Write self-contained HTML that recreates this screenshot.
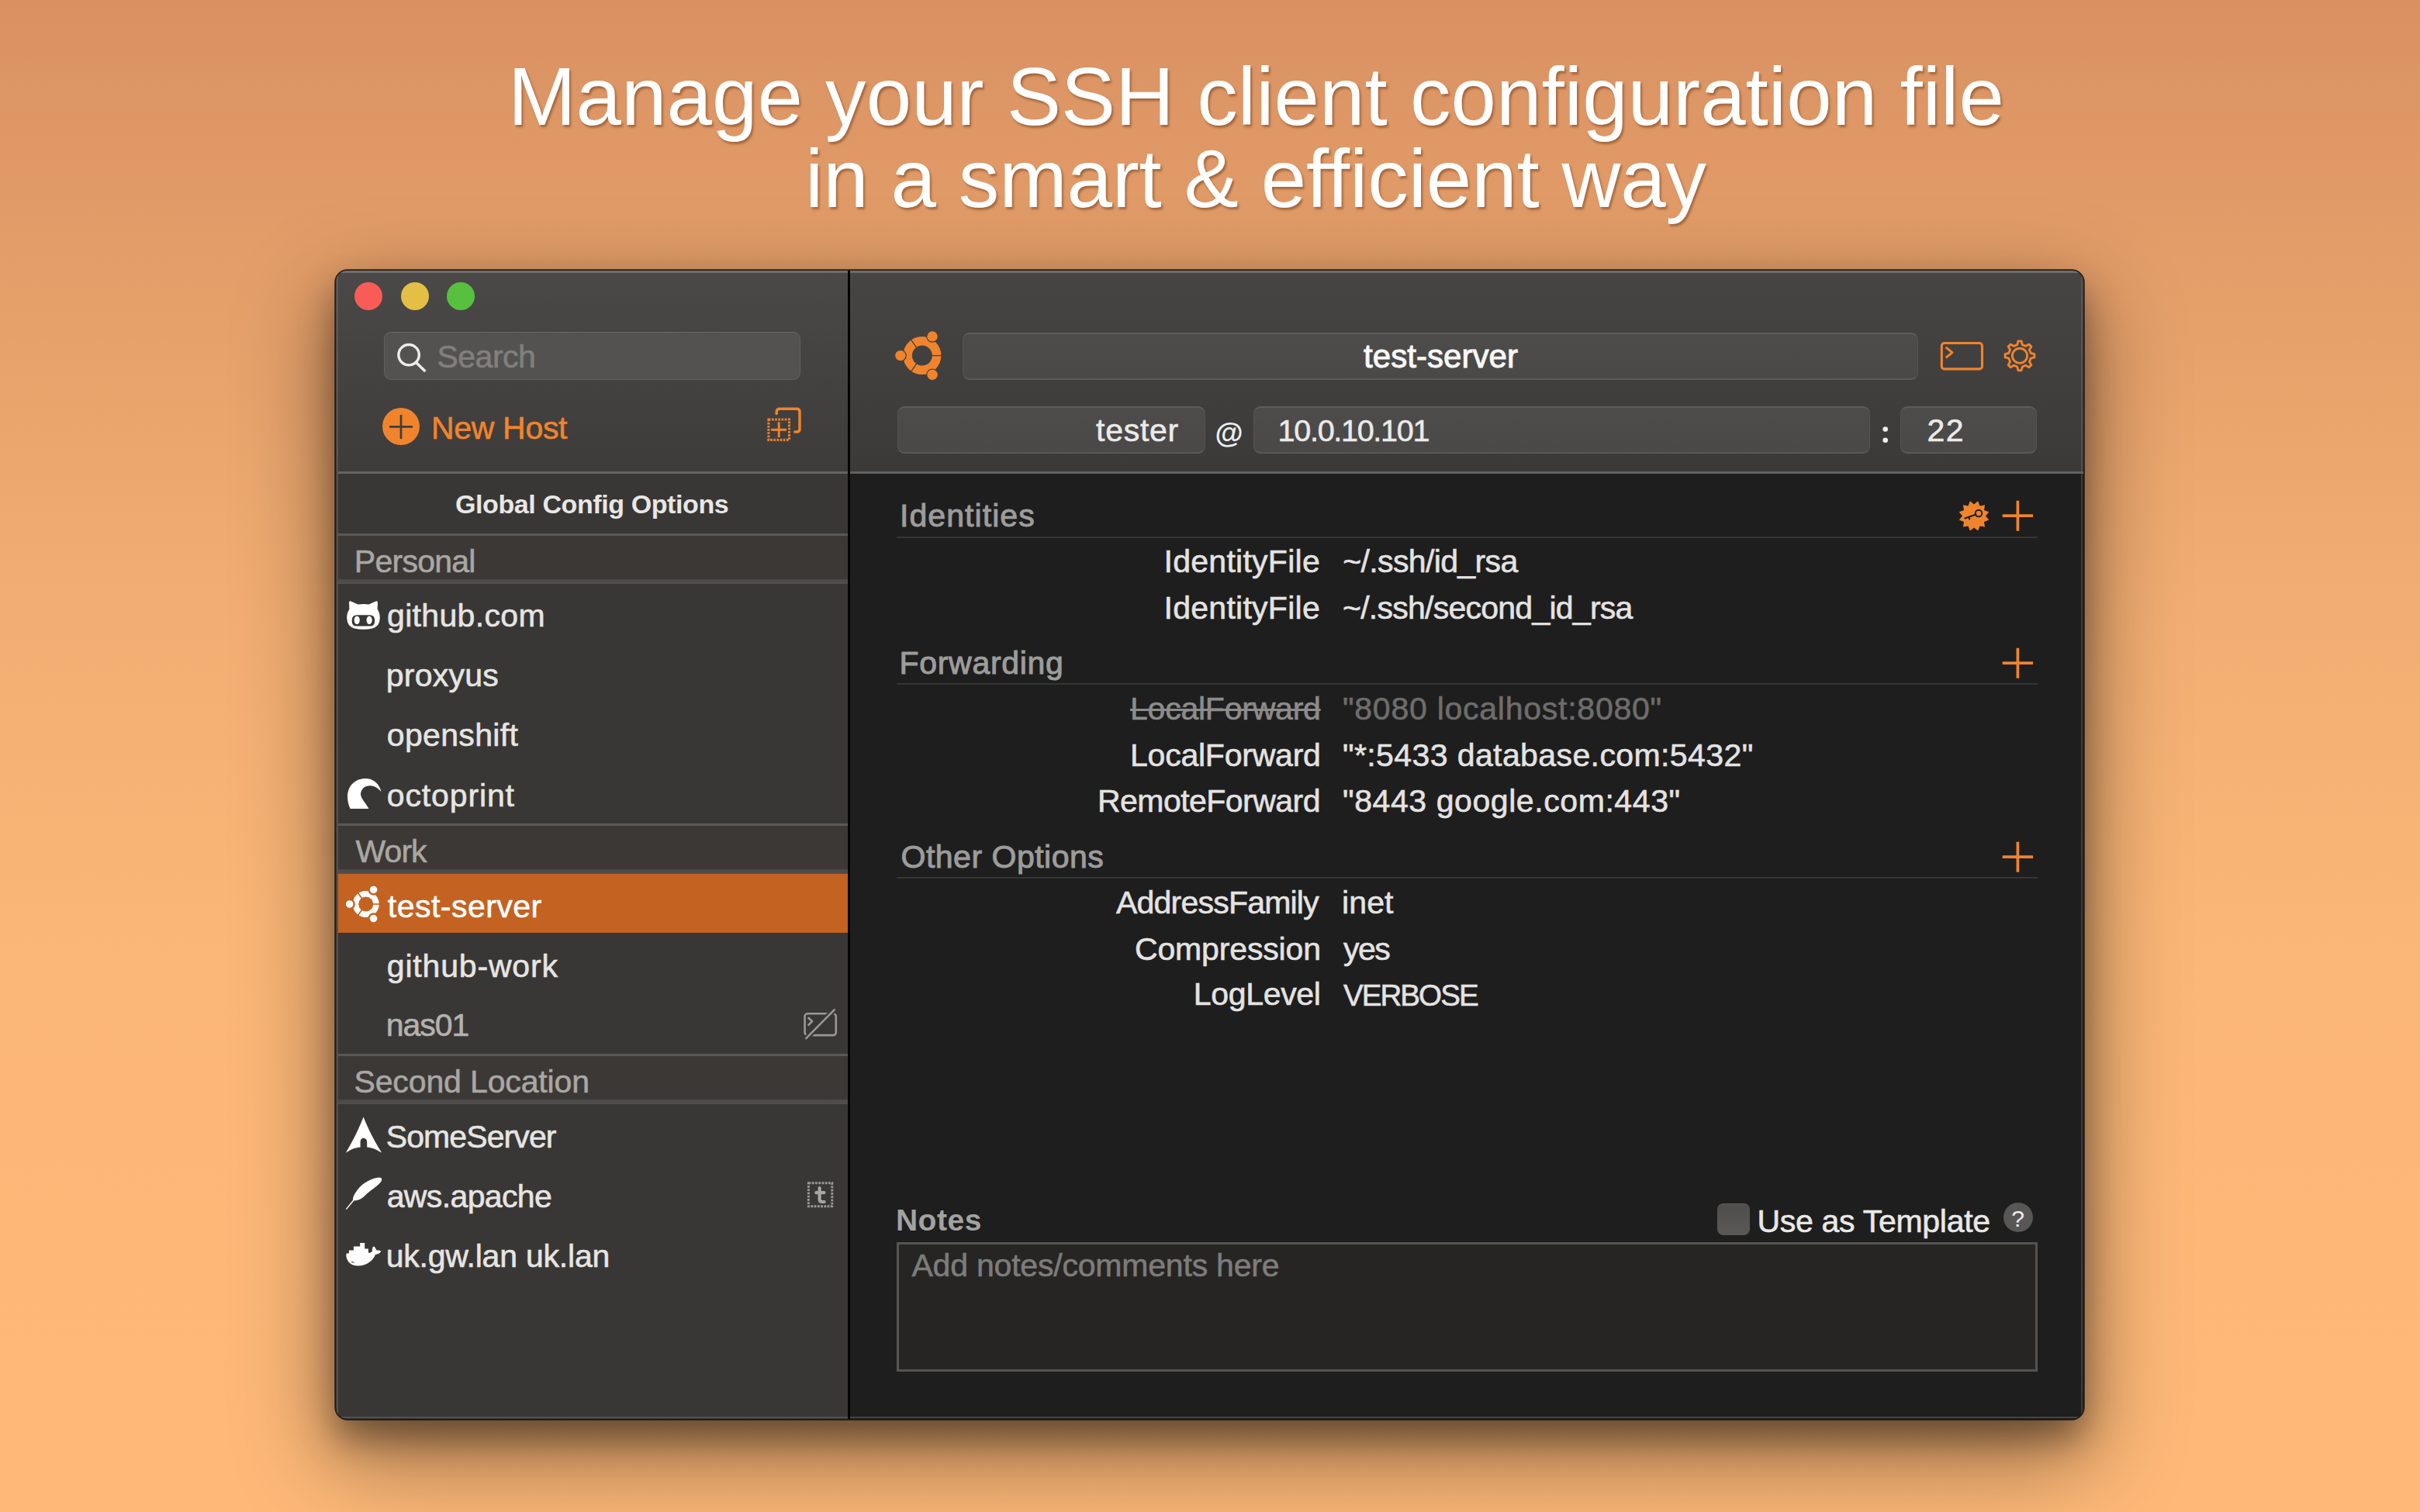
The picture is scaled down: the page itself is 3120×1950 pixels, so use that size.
<!DOCTYPE html>
<html><head><meta charset="utf-8">
<style>
html,body{margin:0;padding:0;width:3120px;height:1950px;overflow:hidden;}
body{background:linear-gradient(180deg,#D99162 0%,#E5A06A 20.5%,#F2AE72 41%,#FAB676 61.5%,#FDB878 82%,#FEB978 100%);font-family:"Liberation Sans",sans-serif;position:relative;}
.t{position:absolute;white-space:nowrap;line-height:normal;}
svg{display:block}
</style></head><body>
<div class="t" style="top:65.4px;font-size:105px;color:#fff;letter-spacing:0.07px;left:655.0px;text-shadow:2px 3px 3px rgba(90,45,10,.45);">Manage your SSH client configuration file</div>
<div class="t" style="top:171.4px;font-size:105px;color:#fff;letter-spacing:-0.13px;left:1038.0px;text-shadow:2px 3px 3px rgba(90,45,10,.45);">in a smart &amp; efficient way</div>
<div id="win" style="position:absolute;left:433px;top:349px;width:2253px;height:1481px;border-radius:15px;overflow:hidden;background:#1e1e1e;box-shadow:0 0 0 1.7px rgba(12,12,12,.85),0 25px 45px rgba(0,0,0,.38),0 45px 120px 10px rgba(0,0,0,.4);">
<div style="position:absolute;left:0;top:0;width:660px;height:100%;background:#393735"></div>
<div style="position:absolute;left:0;top:0;width:660px;height:259px;background:linear-gradient(#4a4948,#3d3c3b)"></div>
<div style="position:absolute;left:663px;top:0;right:0;height:259px;background:linear-gradient(#464544,#3b3a39)"></div>
<div style="position:absolute;left:0;top:0;right:0;height:3px;background:#6f6d6b"></div>
<div style="position:absolute;left:1px;top:0;width:2px;height:100%;background:rgba(120,118,116,.45)"></div>
<div style="position:absolute;right:1px;top:0;width:2px;height:100%;background:rgba(120,118,116,.35)"></div>
<div style="position:absolute;left:0;bottom:1px;right:0;height:2px;background:rgba(110,108,106,.5)"></div>
<div style="position:absolute;left:660px;top:0;width:3px;height:100%;background:#050505"></div>
</div>
<div style="position:absolute;left:457px;top:364px;width:36px;height:36px;background:#F95C57;border-radius:50%;"></div>
<div style="position:absolute;left:516.5px;top:364px;width:36px;height:36px;background:#E3BF45;border-radius:50%;"></div>
<div style="position:absolute;left:576px;top:364px;width:36px;height:36px;background:#57C13F;border-radius:50%;"></div>
<div style="position:absolute;left:495px;top:428px;width:537px;height:62px;background:#545250;border-radius:9px;box-sizing:border-box;border:1.5px solid #636160;border-top-color:#6b6967;"></div>
<svg style="position:absolute;left:505px;top:435px;overflow:visible" width="50" height="50" viewBox="0 0 50 50"><circle cx="22.1" cy="22.7" r="13.2" fill="none" stroke="#ececec" stroke-width="3.4"/><line x1="32" y1="33" x2="43.4" y2="44" stroke="#ececec" stroke-width="3.6"/></svg>
<div class="t" style="top:436.9px;font-size:41px;color:#817f7d;letter-spacing:-0.48px;left:563.4px;-webkit-text-stroke:0.6px #817f7d;">Search</div>
<svg style="position:absolute;left:493px;top:525.6px;overflow:visible" width="48" height="48" viewBox="0 0 48 48"><circle cx="24" cy="24" r="24" fill="#F0842D"/><path d="M9 24.3H39M24 9V40" stroke="#3e3d3c" stroke-width="2.7"/></svg>
<div class="t" style="top:528.9px;font-size:41px;color:#F0842D;letter-spacing:-0.3px;left:555.9px;-webkit-text-stroke:0.6px #F0842D;">New Host</div>
<svg style="position:absolute;left:980px;top:520px;overflow:visible" width="60" height="60" viewBox="0 0 60 60"><path d="M21.2 13.5V11.3Q21.2 7.3 25.2 7.3H47Q51 7.3 51 11.3V32.9Q51 36.9 47 36.9H44.8" fill="none" stroke="#F0842D" stroke-width="3.5" stroke-linecap="round"/><rect x="10.9" y="21" width="26.6" height="26.4" fill="none" stroke="#F0842D" stroke-width="3.1" stroke-dasharray="2.6 1.55"/><path d="M14.1 34.3H34.1M24.2 24.2V44" stroke="#F0842D" stroke-width="2.9"/></svg>
<div style="position:absolute;left:436px;top:608px;width:657px;height:3px;background:#666462;"></div>
<div class="t" style="top:631.2px;font-size:34px;color:#e8e7e6;font-weight:700;letter-spacing:-0.4px;left:587.0px;">Global Config Options</div>
<div style="position:absolute;left:436px;top:688px;width:657px;height:3px;background:#5b5957;"></div>
<div style="position:absolute;left:436px;top:691px;width:657px;height:56px;background:#3c3835;"></div>
<div style="position:absolute;left:436px;top:747px;width:657px;height:6px;background:linear-gradient(#4a4846,#52504e);"></div>
<div class="t" style="top:701.4px;font-size:41px;color:#a9a7a4;letter-spacing:-0.74px;left:456.8px;-webkit-text-stroke:0.6px #a9a7a4;">Personal</div>
<div class="t" style="top:771.1px;font-size:41px;color:#e6e5e3;letter-spacing:0.34px;left:499.0px;-webkit-text-stroke:0.6px #e6e5e3;">github.com</div>
<div class="t" style="top:848.2px;font-size:41px;color:#e6e5e3;letter-spacing:0.22px;left:497.8px;-webkit-text-stroke:0.6px #e6e5e3;">proxyus</div>
<div class="t" style="top:925.2px;font-size:41px;color:#e6e5e3;letter-spacing:0.34px;left:498.8px;-webkit-text-stroke:0.6px #e6e5e3;">openshift</div>
<div class="t" style="top:1002.7px;font-size:41px;color:#e6e5e3;letter-spacing:0.87px;left:498.8px;-webkit-text-stroke:0.6px #e6e5e3;">octoprint</div>
<div style="position:absolute;left:436px;top:1062px;width:657px;height:3px;background:#5b5957;"></div>
<div style="position:absolute;left:436px;top:1065px;width:657px;height:56px;background:#3c3835;"></div>
<div style="position:absolute;left:436px;top:1121px;width:657px;height:6px;background:linear-gradient(#4a4846,#52504e);"></div>
<div class="t" style="top:1075.4px;font-size:41px;color:#a9a7a4;letter-spacing:-0.93px;left:458.5px;-webkit-text-stroke:0.6px #a9a7a4;">Work</div>
<div style="position:absolute;left:436px;top:1127px;width:657px;height:76px;background:#C46221;"></div>
<div class="t" style="top:1145.5px;font-size:41px;color:#ffffff;letter-spacing:0.48px;left:499.8px;-webkit-text-stroke:0.6px #ffffff;">test-server</div>
<div class="t" style="top:1222.5px;font-size:41px;color:#e6e5e3;letter-spacing:0.82px;left:498.8px;-webkit-text-stroke:0.6px #e6e5e3;">github-work</div>
<div class="t" style="top:1298.9px;font-size:41px;color:#b4b2af;letter-spacing:-1.08px;left:497.8px;-webkit-text-stroke:0.6px #b4b2af;">nas01</div>
<div style="position:absolute;left:436px;top:1359px;width:657px;height:3px;background:#5b5957;"></div>
<div style="position:absolute;left:436px;top:1362px;width:657px;height:56px;background:#3c3835;"></div>
<div style="position:absolute;left:436px;top:1418px;width:657px;height:6px;background:linear-gradient(#4a4846,#52504e);"></div>
<div class="t" style="top:1372.4px;font-size:41px;color:#a9a7a4;letter-spacing:-0.14px;left:456.5px;-webkit-text-stroke:0.6px #a9a7a4;">Second Location</div>
<div class="t" style="top:1442.6px;font-size:41px;color:#e6e5e3;letter-spacing:-0.9px;left:497.7px;-webkit-text-stroke:0.6px #e6e5e3;">SomeServer</div>
<div class="t" style="top:1519.6px;font-size:41px;color:#e6e5e3;letter-spacing:-0.63px;left:498.7px;-webkit-text-stroke:0.6px #e6e5e3;">aws.apache</div>
<div class="t" style="top:1596.9px;font-size:41px;color:#e6e5e3;letter-spacing:-0.21px;left:497.7px;-webkit-text-stroke:0.6px #e6e5e3;">uk.gw.lan uk.lan</div>
<svg style="position:absolute;left:440px;top:760px;overflow:visible" width="60" height="60" viewBox="0 0 60 60"><path d="M10 17.5Q9.8 14.6 12.6 15.6L21.5 19.6Q28.5 18.2 35.5 19.6L44.4 15.6Q47.2 14.6 47 17.5L46.6 25.5Q49.8 30.5 49.8 37Q49.8 47.5 40 50.5Q28.5 53 17 50.5Q7.2 47.5 7.2 37Q7.2 30.5 10.4 25.5Z" fill="#ffffff"/><path d="M20 33.3H37Q43.2 33.3 43.2 40.4Q43.2 47.6 37 47.6H20Q13.6 47.6 13.6 40.4Q13.6 33.3 20 33.3Z" fill="#393735"/><ellipse cx="20.2" cy="39.8" rx="3.6" ry="5.2" fill="#ffffff"/><ellipse cx="36.1" cy="39.8" rx="3.6" ry="5.2" fill="#ffffff"/></svg>
<svg style="position:absolute;left:440px;top:995px;overflow:visible" width="60" height="60" viewBox="0 0 60 60"><path d="M11.5 48C8.2 40.5 7.2 33 8.6 26.5C11 15.5 20.5 9 31 9C40.5 9 48.5 14.5 51.5 26C46.5 20.3 41.5 18.3 36.5 18.3C30 18.5 25 23 25 29.5C25.5 35 31.5 40.5 35.5 48Z" fill="#ffffff"/></svg>
<svg style="position:absolute;left:440px;top:1135px;overflow:visible" width="60" height="60" viewBox="0 0 60 60"><circle cx="31.7" cy="31" r="13.25" fill="none" stroke="#ffffff" stroke-width="7.5"/><line x1="31.7" y1="31" x2="52.45" y2="31.00" stroke="#C46221" stroke-width="1.6"/><line x1="31.7" y1="31" x2="19.80" y2="48.00" stroke="#C46221" stroke-width="1.6"/><line x1="31.7" y1="31" x2="19.80" y2="14.00" stroke="#C46221" stroke-width="1.6"/><circle cx="10.70" cy="31.00" r="6.0" fill="#ffffff" stroke="#C46221" stroke-width="2.4"/><circle cx="41.56" cy="12.46" r="6.0" fill="#ffffff" stroke="#C46221" stroke-width="2.4"/><circle cx="41.56" cy="49.54" r="6.0" fill="#ffffff" stroke="#C46221" stroke-width="2.4"/></svg>
<svg style="position:absolute;left:1030px;top:1295px;overflow:visible" width="55" height="55" viewBox="0 0 55 55"><rect x="7.6" y="12.3" width="40.2" height="27.8" rx="3.5" fill="none" stroke="#9a9896" stroke-width="2.6"/><path d="M12.4 17.8L17.1 22.2L12.4 26.9" fill="none" stroke="#9a9896" stroke-width="2.6" stroke-linecap="round" stroke-linejoin="round"/><line x1="9.3" y1="44.2" x2="45.6" y2="7.3" stroke="#393735" stroke-width="7"/><line x1="9.3" y1="44.2" x2="45.6" y2="7.3" stroke="#9a9896" stroke-width="2.6" stroke-linecap="round"/></svg>
<svg style="position:absolute;left:440px;top:1435px;overflow:visible" width="60" height="60" viewBox="0 0 60 60"><path d="M28.6 5.4C31 11.5 33 16 35.5 21.5C41 33 46 42 52.2 51.8C45 47 39 45 33.2 44.5L33.2 38Q33 33 28.6 32.8Q24.6 33 24.6 38L24.6 44.5C18.5 45 12.5 47 5.8 51.8C11.5 42 16.5 33 21.8 21.5C24.2 16 26.2 11.5 28.6 5.4Z" fill="#ffffff"/></svg>
<svg style="position:absolute;left:440px;top:1512px;overflow:visible" width="60" height="60" viewBox="0 0 60 60"><path d="M51.6 7.2C46 5 31 10.5 22.5 20.5C17.5 26.5 14.8 31.5 15 35.8L5.8 47.2L6.8 47.9L16.4 36.6C22 36.3 26.5 34 30.5 30C38 22.5 46 19 50.8 12.6C52.3 10.6 52.6 8.3 51.6 7.2Z" fill="#ffffff"/></svg>
<svg style="position:absolute;left:1030px;top:1515px;overflow:visible" width="55" height="55" viewBox="0 0 55 55"><rect x="12.4" y="10.8" width="30.4" height="30" fill="none" stroke="#9a9896" stroke-width="3" stroke-dasharray="2.9 1.35"/><path d="M26.6 17.2V31.5Q26.6 35 30 35H32.6M22.3 23.2H32.4" fill="none" stroke="#a8a6a4" stroke-width="4.2" stroke-linecap="round"/></svg>
<svg style="position:absolute;left:440px;top:1590px;overflow:visible" width="60" height="60" viewBox="0 0 60 60"><path d="M6.5 26.5L9.9 26.5L9.9 22.6L15.9 22.6L15.9 17.5L24.2 17.5L24.2 13.1L30.2 13.1L30.2 20.6L34.9 20.6L34.9 25.8C37 26 39.5 25 40 23C39.5 20.5 40.3 18 41.8 17.5C43.5 18 44.8 20.5 45.5 22.5C47.5 22.3 50 22.5 51.3 23.8C50 26.3 47 27.8 44 28C41 35.5 33 42.5 21.5 42.5C13.5 42.5 7.5 38 6.3 30Z" fill="#ffffff"/><path d="M13 36.8Q15.5 37 17.5 39L13.5 38.2Z" fill="#393735"/></svg>
<svg style="position:absolute;left:1145px;top:420px;overflow:visible" width="80" height="80" viewBox="0 0 80 80"><circle cx="43.9" cy="38.6" r="18.75" fill="none" stroke="#F0842D" stroke-width="11.5"/><line x1="43.9" y1="38.6" x2="74.15" y2="38.60" stroke="#42413f" stroke-width="1.3"/><line x1="43.9" y1="38.6" x2="26.55" y2="63.38" stroke="#42413f" stroke-width="1.3"/><line x1="43.9" y1="38.6" x2="26.55" y2="13.82" stroke="#42413f" stroke-width="1.3"/><circle cx="15.90" cy="38.60" r="7.3" fill="#F0842D" stroke="#42413f" stroke-width="1.2"/><circle cx="57.05" cy="13.88" r="7.3" fill="#F0842D" stroke="#42413f" stroke-width="1.2"/><circle cx="57.05" cy="63.32" r="7.3" fill="#F0842D" stroke="#42413f" stroke-width="1.2"/></svg>
<div style="position:absolute;left:1241px;top:428.5px;width:1232px;height:61.5px;background:linear-gradient(#4d4c4b,#4a4948);border-radius:9px;box-sizing:border-box;border:1.5px solid #555453;border-top:2px solid #5d5c5b;border-bottom:2px solid #5b5a59;"></div>
<div class="t" style="top:436.2px;font-size:42px;color:#f8f8f8;letter-spacing:0.06px;left:1758.0px;-webkit-text-stroke:1.0px #f8f8f8;">test-server</div>
<svg style="position:absolute;left:2490px;top:425px;overflow:visible" width="150" height="70" viewBox="0 0 150 70"><rect x="13.3" y="17.5" width="52.2" height="33.4" rx="3.5" fill="none" stroke="#F0842D" stroke-width="3.1"/><path d="M19.6 23.6L27.0 29.6L19.6 35.6" fill="none" stroke="#F0842D" stroke-width="3.0" stroke-linecap="round" stroke-linejoin="round"/></svg>
<svg style="position:absolute;left:2490px;top:425px;overflow:visible" width="150" height="70" viewBox="0 0 150 70"><path d="M110.70 19.58 L111.92 14.91 L116.08 14.91 L117.30 19.58 L121.73 21.41 L125.88 18.97 L128.83 21.92 L126.39 26.07 L128.22 30.50 L132.89 31.72 L132.89 35.88 L128.22 37.10 L126.39 41.53 L128.83 45.68 L125.88 48.63 L121.73 46.19 L117.30 48.02 L116.08 52.69 L111.92 52.69 L110.70 48.02 L106.27 46.19 L102.12 48.63 L99.17 45.68 L101.61 41.53 L99.78 37.10 L95.11 35.88 L95.11 31.72 L99.78 30.50 L101.61 26.07 L99.17 21.92 L102.12 18.97 L106.27 21.41Z" fill="none" stroke="#F0842D" stroke-width="2.9" stroke-linejoin="round"/><circle cx="114" cy="33.8" r="9.6" fill="none" stroke="#F0842D" stroke-width="2.9"/></svg>
<div style="position:absolute;left:1157px;top:523.5px;width:396.5px;height:61.5px;background:linear-gradient(#4d4c4b,#4a4948);border-radius:9px;box-sizing:border-box;border:1.5px solid #555453;border-top:2px solid #5d5c5b;border-bottom:2px solid #5b5a59;"></div>
<div class="t" style="top:531.9px;font-size:41px;color:#ebeae9;letter-spacing:0.74px;left:1413.0px;-webkit-text-stroke:0.6px #ebeae9;">tester</div>
<div class="t" style="top:537.5px;font-size:37px;color:#eeeeee;font-weight:700;left:1566.6px;">@</div>
<div style="position:absolute;left:1616px;top:523.5px;width:794.5px;height:61.5px;background:linear-gradient(#4d4c4b,#4a4948);border-radius:9px;box-sizing:border-box;border:1.5px solid #555453;border-top:2px solid #5d5c5b;border-bottom:2px solid #5b5a59;"></div>
<div class="t" style="top:533.2px;font-size:39.5px;color:#ebeae9;letter-spacing:-1.29px;left:1647.6px;-webkit-text-stroke:0.6px #ebeae9;">10.0.10.101</div>
<svg style="position:absolute;left:2420px;top:545px;overflow:visible" width="22" height="30" viewBox="0 0 22 30"><circle cx="10.7" cy="8.5" r="3.3" fill="#eeeeee"/><circle cx="10.7" cy="22.7" r="3.3" fill="#eeeeee"/></svg>
<div style="position:absolute;left:2450px;top:523.5px;width:175.5px;height:61.5px;background:linear-gradient(#4d4c4b,#4a4948);border-radius:9px;box-sizing:border-box;border:1.5px solid #555453;border-top:2px solid #5d5c5b;border-bottom:2px solid #5b5a59;"></div>
<div class="t" style="top:531.9px;font-size:41px;color:#ebeae9;letter-spacing:1.3px;left:2484.6px;-webkit-text-stroke:0.6px #ebeae9;">22</div>
<div style="position:absolute;left:1096px;top:608px;width:1590px;height:3px;background:#646260;"></div>
<div class="t" style="top:641.9px;font-size:41px;color:#9d9c9b;letter-spacing:1.07px;left:1160.0px;-webkit-text-stroke:1.0px #9d9c9b;">Identities</div>
<div style="position:absolute;left:1156px;top:691.5px;width:1471px;height:2px;background:#353535;"></div>
<svg style="position:absolute;left:2525px;top:645px;overflow:visible" width="40" height="41" viewBox="0 0 40 41"><path d="M25.15 1.18 L27.50 7.41 L34.07 6.33 L32.99 12.90 L39.22 15.25 L35.00 20.40 L39.22 25.55 L32.99 27.90 L34.07 34.47 L27.50 33.39 L25.15 39.62 L20.00 35.40 L14.85 39.62 L12.50 33.39 L5.93 34.47 L7.01 27.90 L0.78 25.55 L5.00 20.40 L0.78 15.25 L7.01 12.90 L5.93 6.33 L12.50 7.41 L14.85 1.18 L20.00 5.40Z" fill="#F0842D"/><circle cx="26" cy="17" r="4.3" fill="none" stroke="#1e1e1e" stroke-width="1.9"/><path d="M8.4 23.4L22.4 18.6" stroke="#1e1e1e" stroke-width="2.1" stroke-linecap="round"/><path d="M12.5 22.5L14.5 21.8L15.3 25L13.4 25.6Z" fill="#1e1e1e"/></svg>
<svg style="position:absolute;left:2580px;top:644.3px;overflow:visible" width="44" height="42" viewBox="0 0 44 42"><path d="M1.7 21.2H41.1M21.4 1.7V40.8" stroke="#F0842D" stroke-width="3.7"/></svg>
<div class="t" style="top:701.4px;font-size:41px;color:#e4e3e2;letter-spacing:0.27px;left:1500.5px;-webkit-text-stroke:0.6px #e4e3e2;">IdentityFile</div>
<div class="t" style="top:701.4px;font-size:41px;color:#e4e3e2;letter-spacing:-0.63px;left:1731.2px;-webkit-text-stroke:0.6px #e4e3e2;">~/.ssh/id_rsa</div>
<div class="t" style="top:760.9px;font-size:41px;color:#e4e3e2;letter-spacing:0.27px;left:1500.5px;-webkit-text-stroke:0.6px #e4e3e2;">IdentityFile</div>
<div class="t" style="top:760.9px;font-size:41px;color:#e4e3e2;letter-spacing:-0.75px;left:1731.0px;-webkit-text-stroke:0.6px #e4e3e2;">~/.ssh/second_id_rsa</div>
<div class="t" style="top:831.6px;font-size:41px;color:#9d9c9b;letter-spacing:0.7px;left:1159.5px;-webkit-text-stroke:1.0px #9d9c9b;">Forwarding</div>
<div style="position:absolute;left:1156px;top:881.2px;width:1471px;height:2px;background:#353535;"></div>
<svg style="position:absolute;left:2580px;top:834.1px;overflow:visible" width="44" height="42" viewBox="0 0 44 42"><path d="M1.7 21.2H41.1M21.4 1.7V40.8" stroke="#F0842D" stroke-width="3.7"/></svg>
<div class="t" style="top:891.1px;font-size:41px;color:#8d8c8b;letter-spacing:-0.23px;left:1457.0px;text-decoration:line-through;text-decoration-thickness:2.5px;-webkit-text-stroke:0.6px #8d8c8b;">LocalForward</div>
<div class="t" style="top:891.1px;font-size:41px;color:#6e6d6c;letter-spacing:0.75px;left:1731.0px;-webkit-text-stroke:0.6px #6e6d6c;">"8080 localhost:8080"</div>
<div class="t" style="top:950.6px;font-size:41px;color:#e4e3e2;letter-spacing:-0.23px;left:1457.0px;-webkit-text-stroke:0.6px #e4e3e2;">LocalForward</div>
<div class="t" style="top:950.6px;font-size:41px;color:#e4e3e2;letter-spacing:0.4px;left:1731.0px;-webkit-text-stroke:0.6px #e4e3e2;">"*:5433 database.com:5432"</div>
<div class="t" style="top:1010.1px;font-size:41px;color:#e4e3e2;letter-spacing:-0.54px;left:1415.0px;-webkit-text-stroke:0.6px #e4e3e2;">RemoteForward</div>
<div class="t" style="top:1010.1px;font-size:41px;color:#e4e3e2;letter-spacing:0.58px;left:1731.0px;-webkit-text-stroke:0.6px #e4e3e2;">"8443 google.com:443"</div>
<div class="t" style="top:1081.7px;font-size:41px;color:#9d9c9b;letter-spacing:0.51px;left:1161.5px;-webkit-text-stroke:1.0px #9d9c9b;">Other Options</div>
<div style="position:absolute;left:1156px;top:1131.3px;width:1471px;height:2px;background:#353535;"></div>
<svg style="position:absolute;left:2580px;top:1084.2px;overflow:visible" width="44" height="42" viewBox="0 0 44 42"><path d="M1.7 21.2H41.1M21.4 1.7V40.8" stroke="#F0842D" stroke-width="3.7"/></svg>
<div class="t" style="top:1141.2px;font-size:41px;color:#e4e3e2;letter-spacing:-0.79px;left:1439.0px;-webkit-text-stroke:0.6px #e4e3e2;">AddressFamily</div>
<div class="t" style="top:1141.2px;font-size:41px;color:#e4e3e2;letter-spacing:0.13px;left:1730.0px;-webkit-text-stroke:0.6px #e4e3e2;">inet</div>
<div class="t" style="top:1200.7px;font-size:41px;color:#e4e3e2;letter-spacing:-0.15px;left:1463.0px;-webkit-text-stroke:0.6px #e4e3e2;">Compression</div>
<div class="t" style="top:1200.7px;font-size:41px;color:#e4e3e2;letter-spacing:-1.5px;left:1732.0px;-webkit-text-stroke:0.6px #e4e3e2;">yes</div>
<div class="t" style="top:1259.4px;font-size:41px;color:#e4e3e2;letter-spacing:-0.33px;left:1538.8px;-webkit-text-stroke:0.6px #e4e3e2;">LogLevel</div>
<div class="t" style="top:1261.6px;font-size:38.5px;color:#e4e3e2;letter-spacing:-1.93px;left:1732.0px;-webkit-text-stroke:0.6px #e4e3e2;">VERBOSE</div>
<div class="t" style="top:1551.7px;font-size:39px;color:#a3a2a1;font-weight:700;letter-spacing:0.52px;left:1154.9px;">Notes</div>
<div style="position:absolute;left:1155.5px;top:1602px;width:1471.5px;height:167px;background:#262524;box-sizing:border-box;border:3px solid #555453;"></div>
<div class="t" style="top:1609.2px;font-size:41px;color:#7d7c7b;letter-spacing:-0.2px;left:1175.4px;-webkit-text-stroke:0.6px #7d7c7b;">Add notes/comments here</div>
<div style="position:absolute;left:2214px;top:1551.5px;width:41.5px;height:41px;background:linear-gradient(#4f4e4d,#5a5958);border-radius:8px;box-sizing:border-box;border-top:1px solid #5f5e5d;"></div>
<div class="t" style="top:1551.5px;font-size:41px;color:#e9e8e7;letter-spacing:-0.28px;left:2265.4px;-webkit-text-stroke:0.6px #e9e8e7;">Use as Template</div>
<div style="position:absolute;left:2582.5px;top:1551px;width:38px;height:38px;background:#585756;border-radius:50%;"></div>
<div class="t" style="top:1554.8px;font-size:30px;color:#f0f0f0;left:1601.5px;width:2000px;text-align:center;">?</div>
</body></html>
